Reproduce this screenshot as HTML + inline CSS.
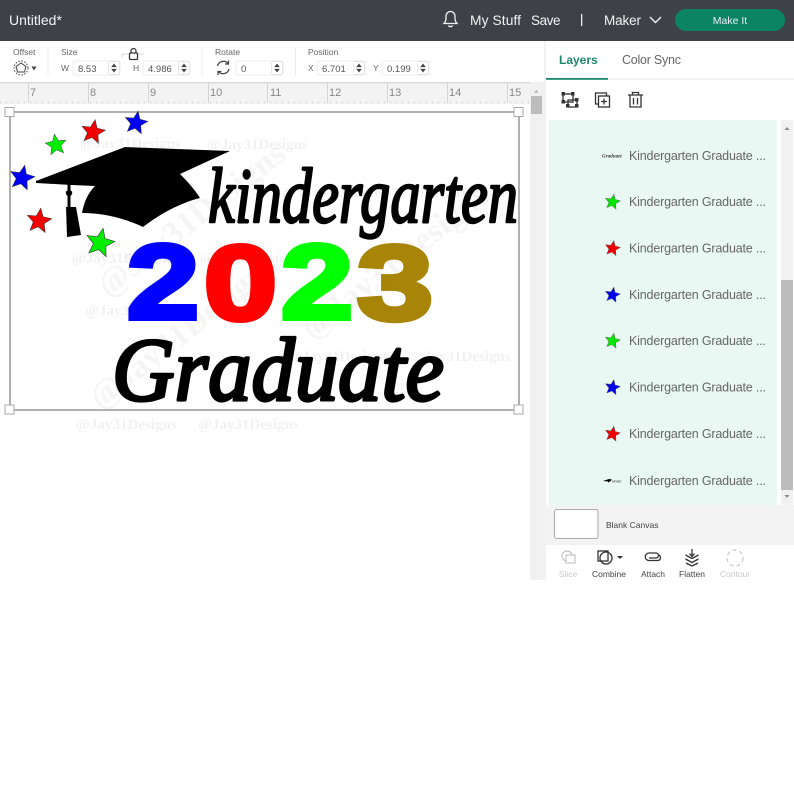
<!DOCTYPE html>
<html><head><meta charset="utf-8"><title>Untitled</title>
<style>
html,body{margin:0;padding:0;background:#fff;width:794px;height:794px;overflow:hidden}
svg{display:block}
text{font-family:"Liberation Sans",sans-serif}
.wm{font-family:"Liberation Serif",serif;font-weight:bold;fill:#000;opacity:.05;font-size:15px}
.wl{font-family:"Liberation Serif",serif;font-weight:bold;fill:#000;opacity:.035;font-size:34px}
.sm{font-size:8.5px;fill:#666}
.val{font-size:9.5px;fill:#555}
.rn{font-size:11px;fill:#888}
.ly{font-size:12.5px;fill:#666}
.tool{font-size:8.5px;fill:#444;text-anchor:middle}
.ic{fill:none;stroke:#333;stroke-width:1.3}
.d{font-weight:bold;font-size:106px;stroke-width:5;stroke-linejoin:miter;paint-order:stroke}
.sc{font-family:"Liberation Serif",serif;font-style:italic;fill:#000;stroke:#000;stroke-linejoin:round}
</style></head><body>
<svg width="794" height="794" viewBox="0 0 794 794" xmlns="http://www.w3.org/2000/svg">
<defs>
<polygon id="s" points="0,-1 .2645,-.364 .951,-.309 .428,.139 .588,.809 0,.45 -.588,.809 -.428,.139 -.951,-.309 -.2645,-.364"/>
<g id="sp"><rect x="0" y="0" width="11" height="13" rx="2" fill="#fff" stroke="#ddd" stroke-width=".7"/><path d="M5.5 2l2.800 3.600h-5.600zM5.500 11l2.800-3.600h-5.600z" fill="#444"/></g>
</defs>

<!-- top bar -->
<rect width="794" height="41" fill="#3e4248"/>
<text x="9" y="25" font-size="14" fill="#f2f2f2">Untitled*</text>
<path d="M444 23.5c2-2 2-4 2-7 0-3 2-5 4.500-5s4.500 2 4.500 5c0 3 0 5 2 7zM448.500 25.500c.5 1.500 3.500 1.500 4 0" fill="none" stroke="#f2f2f2" stroke-width="1.300"/>
<text x="470" y="25" font-size="13.800" fill="#f2f2f2" textLength="51">My Stuff</text>
<text x="531" y="25" font-size="13.500" fill="#f2f2f2" textLength="29.500">Save</text>
<rect x="581" y="14" width="1.300" height="12" fill="#eee"/>
<text x="604" y="25" font-size="13.500" fill="#f2f2f2" textLength="37">Maker</text>
<path d="M650 17l5.500 5.500 5.500-5.500" fill="none" stroke="#f2f2f2" stroke-width="1.400"/>
<rect x="675" y="9" width="110" height="22" rx="11" fill="#0b8463"/>
<text x="730" y="24" font-size="10.500" fill="#eef" text-anchor="middle">Make It</text>

<!-- toolbar -->
<text x="13" y="55" class="sm">Offset</text>
<g fill="none" stroke="#444" stroke-width="1"><polygon points="21,63 26,66.500 24.500,72 17.500,72 16,66.500"/><circle cx="21" cy="68" r="7" stroke-dasharray="1.500 1.500"/></g>
<path d="M31.500 66.500h5l-2.500 4z" fill="#444"/>
<rect x="47.500" y="48" width="1" height="28" fill="#ececec"/>
<text x="61" y="55" class="sm">Size</text>
<text x="61" y="71" class="sm">W</text>
<rect x="73" y="61" width="47" height="14" rx="2" fill="#fff" stroke="#e8e8e8" stroke-width=".8"/>
<text x="78" y="72" class="val">8.53</text>
<use href="#sp" x="108.500" y="61.500"/>
<path d="M122 58v-4h6M138 54h6" fill="none" stroke="#ccc" stroke-width=".7"/>
<rect x="129.500" y="53" width="8" height="6.500" rx="1" fill="none" stroke="#333" stroke-width="1.300"/>
<path d="M131 53v-2a2.500 2.500 0 0 1 5 0v2" fill="none" stroke="#333" stroke-width="1.200"/>
<text x="133" y="71" class="sm">H</text>
<rect x="143" y="61" width="47" height="14" rx="2" fill="#fff" stroke="#e8e8e8" stroke-width=".8"/>
<text x="148" y="72" class="val">4.986</text>
<use href="#sp" x="178.500" y="61.500"/>
<rect x="201.500" y="48" width="1" height="28" fill="#ececec"/>
<text x="215" y="55" class="sm">Rotate</text>
<path d="M217.500 66a6 6 0 0 1 10.500-2.500M229 69a6 6 0 0 1-10.500 2.500M228.500 60.500v3.500h-3.500M218 75v-3.500h3.500" fill="none" stroke="#444" stroke-width="1.300"/>
<rect x="236" y="61" width="47" height="14" rx="2" fill="#fff" stroke="#e8e8e8" stroke-width=".8"/>
<text x="241" y="72" class="val">0</text>
<use href="#sp" x="271.500" y="61.500"/>
<rect x="295" y="48" width="1" height="28" fill="#ececec"/>
<text x="308" y="55" class="sm">Position</text>
<text x="308" y="71" class="sm">X</text>
<rect x="317" y="61" width="48" height="14" rx="2" fill="#fff" stroke="#e8e8e8" stroke-width=".8"/>
<text x="322" y="72" class="val">6.701</text>
<use href="#sp" x="353.500" y="61.500"/>
<text x="373" y="71" class="sm">Y</text>
<rect x="382" y="61" width="47" height="14" rx="2" fill="#fff" stroke="#e8e8e8" stroke-width=".8"/>
<text x="387" y="72" class="val">0.199</text>
<use href="#sp" x="417.500" y="61.500"/>

<!-- ruler -->
<rect x="0" y="82" width="530" height="22" fill="#f3f3f3"/>
<rect x="0" y="82" width="544" height="1.300" fill="#d8d8d8"/>
<path d="M0 102.500H530" stroke="#d4d4d4" stroke-width="2" stroke-dasharray="1 5"/>
<g fill="#d6d6d6">
<rect x="28" y="83" width="1" height="20"/><rect x="88" y="83" width="1" height="20"/><rect x="148" y="83" width="1" height="20"/><rect x="208" y="83" width="1" height="20"/><rect x="267" y="83" width="1" height="20"/><rect x="327" y="83" width="1" height="20"/><rect x="387" y="83" width="1" height="20"/><rect x="447" y="83" width="1" height="20"/><rect x="507" y="83" width="1" height="20"/>
</g>
<text x="30" y="96" class="rn">7</text><text x="90" y="96" class="rn">8</text><text x="150" y="96" class="rn">9</text><text x="210" y="96" class="rn">10</text><text x="270" y="96" class="rn">11</text><text x="329" y="96" class="rn">12</text><text x="389" y="96" class="rn">13</text><text x="449" y="96" class="rn">14</text><text x="509" y="96" class="rn">15</text>
<rect x="530" y="82" width="14" height="498" fill="#f1f1f1"/>
<path d="M534 92.500h4.500l-2.250-2.500z" fill="#aaa"/>
<rect x="531" y="96" width="11" height="18" fill="#bdbdbd"/>

<!-- watermarks -->
<text x="80" y="148" class="wm">@Jay31Designs</text>
<text x="207" y="149" class="wm">@Jay31Designs</text>
<text x="283" y="197" class="wm">@Jay31Designs</text>
<text x="410" y="197" class="wm">@Jay31Designs</text>
<text x="72" y="263" class="wm">@Jay31Designs</text>
<text x="200" y="263" class="wm">@Jay31Designs</text>
<text x="85" y="315" class="wm">@Jay31Designs</text>
<text x="288" y="361" class="wm">@Jay31Designs</text>
<text x="410" y="361" class="wm">@Jay31Designs</text>
<text x="76" y="429" class="wm">@Jay31Designs</text>
<text x="198" y="429" class="wm">@Jay31Designs</text>
<text class="wl" transform="translate(108 298) rotate(-38)">@Jay31Designs</text>
<text class="wl" transform="translate(100 410) rotate(-38)">@Jay31Designs</text>
<text class="wl" transform="translate(312 340) rotate(-38)">@Jay31Designs</text>

<!-- selection box -->
<rect x="10" y="112" width="509" height="298" fill="none" stroke="#a8a8a8" stroke-width="1.800"/>

<!-- cap -->
<path d="M36 181 125 147 230 151 180 174C188 182 195 190 200 198 180 203 160 214 143 227 124 218 103 213 82 213 84 202 88 193 95 186L72 185 36 183Z" fill="#000"/>
<path d="M69 184v24" stroke="#000" stroke-width="3"/>
<circle cx="69" cy="193" r="3.200" fill="#000"/>
<path d="M66 207H76L81 235 67 237Z" fill="#000"/>

<!-- stars -->
<use href="#s" transform="translate(136 123) rotate(10) scale(12)" fill="#0000f0" stroke="#333" stroke-width=".04"/>
<use href="#s" transform="translate(93 132) rotate(10) scale(12.500)" fill="#f00000" stroke="#333" stroke-width=".04"/>
<use href="#s" transform="translate(56 145) rotate(-8) scale(11)" fill="#00ee00" stroke="#333" stroke-width=".04"/>
<use href="#s" transform="translate(22 178) rotate(12) scale(13)" fill="#0000f0" stroke="#333" stroke-width=".04"/>
<use href="#s" transform="translate(39 221) rotate(8) scale(13)" fill="#f00000" stroke="#333" stroke-width=".04"/>
<use href="#s" transform="translate(100 243) rotate(12) scale(15)" fill="#00ee00" stroke="#333" stroke-width=".04"/>

<!-- digits -->
<text class="d" x="127" y="318.500" fill="#0000ff" stroke="#0000ff" textLength="72" lengthAdjust="spacingAndGlyphs">2</text>
<text class="d" x="204" y="319.500" fill="#ff0000" stroke="#ff0000" textLength="73" lengthAdjust="spacingAndGlyphs">0</text>
<text class="d" x="281" y="318.500" fill="#00ff00" stroke="#00ff00" textLength="72" lengthAdjust="spacingAndGlyphs">2</text>
<text class="d" x="357" y="319.500" fill="#a88407" stroke="#a88407" textLength="76" lengthAdjust="spacingAndGlyphs">3</text>

<!-- script -->
<text class="sc" x="208" y="222" font-size="78" stroke-width="2.400" textLength="310" lengthAdjust="spacingAndGlyphs">kindergarten</text>
<text class="sc" x="112" y="400" font-size="90" stroke-width="3.200" textLength="332" lengthAdjust="spacingAndGlyphs">Graduate</text>

<!-- handles -->
<g fill="#fff" stroke="#a8a8a8" stroke-width="1">
<rect x="5" y="107.500" width="9" height="9"/><rect x="514" y="107.500" width="9" height="9"/><rect x="5" y="405" width="9" height="9"/><rect x="514" y="405" width="9" height="9"/>
</g>

<!-- side panel -->
<rect x="544.500" y="41" width="1" height="540" fill="#e4e4e4"/>
<text x="559" y="64" font-size="12" font-weight="bold" fill="#1a8a6c">Layers</text>
<rect x="546" y="78" width="62" height="1.800" fill="#1a8a6c"/>
<rect x="608" y="78.500" width="186" height="1" fill="#eaeaea"/>
<text x="622" y="64" font-size="12.500" fill="#666" textLength="59">Color Sync</text>
<!-- group/duplicate/delete icons -->
<g class="ic">
<rect x="563" y="94" width="10" height="8"/><rect x="568" y="100" width="9" height="7"/>
</g>
<g fill="#333"><rect x="561.500" y="92" width="3.500" height="3.500"/><rect x="571" y="92" width="3.500" height="3.500"/><rect x="561.500" y="100" width="3.500" height="3.500"/><rect x="566" y="104" width="3.500" height="3.500"/><rect x="575" y="104" width="3.500" height="3.500"/><rect x="575" y="98" width="3.500" height="3.500"/></g>
<g class="ic">
<path d="M598 104h-2.500V93h11v2.500"/><rect x="598.500" y="96" width="11" height="11"/><path d="M604 98.500v6M601 101.500h6"/>
<path d="M628 95h15M632.500 95v-2.500h6V95M630 95v12h11V95M633.500 98v6.500M637.500 98v6.500"/>
</g>

<!-- layer list -->
<rect x="549" y="120" width="228" height="385" fill="#eaf8f4"/>
<rect x="781" y="120" width="12" height="385" fill="#f1f1f1"/>
<rect x="781" y="280" width="12" height="210" fill="#bcbcbc"/>
<path d="M784.500 130h5l-2.500-3zM784.500 495h5l-2.500 3z" fill="#888"/>

<text x="602" y="157.500" font-size="5" font-style="italic" font-weight="bold" fill="#333" textLength="20" style="font-family:'Liberation Serif',serif">Graduate</text>
<text x="629" y="160" class="ly" textLength="137">Kindergarten Graduate ...</text>
<use href="#s" transform="translate(612.500 202) rotate(10) scale(8)" fill="#00e600" stroke="#555" stroke-width=".05"/>
<text x="629" y="206" class="ly" textLength="137">Kindergarten Graduate ...</text>
<use href="#s" transform="translate(612.500 248.500) rotate(10) scale(8)" fill="#ee0000" stroke="#555" stroke-width=".05"/>
<text x="629" y="252.500" class="ly" textLength="137">Kindergarten Graduate ...</text>
<use href="#s" transform="translate(612.500 295) rotate(10) scale(8)" fill="#0000e6" stroke="#555" stroke-width=".05"/>
<text x="629" y="299" class="ly" textLength="137">Kindergarten Graduate ...</text>
<use href="#s" transform="translate(612.500 341) rotate(10) scale(8)" fill="#00e600" stroke="#555" stroke-width=".05"/>
<text x="629" y="345" class="ly" textLength="137">Kindergarten Graduate ...</text>
<use href="#s" transform="translate(612.500 387.500) rotate(10) scale(8)" fill="#0000e6" stroke="#555" stroke-width=".05"/>
<text x="629" y="391.500" class="ly" textLength="137">Kindergarten Graduate ...</text>
<use href="#s" transform="translate(612.500 434) rotate(10) scale(8)" fill="#ee0000" stroke="#555" stroke-width=".05"/>
<text x="629" y="438" class="ly" textLength="137">Kindergarten Graduate ...</text>
<path d="M603 481l6-2 3 .5-2 2-2 1v-1z" fill="#000"/>
<text x="612" y="482.500" font-size="3.500" fill="#333">kinder</text>
<text x="629" y="485" class="ly" textLength="137">Kindergarten Graduate ...</text>

<!-- blank canvas -->
<rect x="546" y="505" width="248" height="40" fill="#f3f3f3"/>
<rect x="554.500" y="509.500" width="43.500" height="29" rx="2" fill="#fff" stroke="#aaa"/>
<text x="606" y="528" font-size="8.500" fill="#444">Blank Canvas</text>

<!-- bottom tools -->
<g fill="none" stroke="#c4c4c4" stroke-width="1.200"><circle cx="567" cy="556" r="5"/><rect x="566" y="555" width="9" height="8" fill="#fff"/></g>
<text x="568" y="577" class="tool" style="fill:#c8c8c8">Slice</text>
<g class="ic"><rect x="598" y="551" width="10" height="10"/><circle cx="606" cy="558" r="6"/></g>
<path d="M617 556h6l-3 3z" fill="#333"/>
<text x="609" y="577" class="tool">Combine</text>
<path d="M649 558h7a2.500 2.500 0 0 0 0-5h-7a3 3 0 0 0 0 7.500h9a3 3 0 0 0 1-5.500" class="ic"/>
<text x="653" y="577" class="tool">Attach</text>
<path d="M692 549v7M689.500 553.500l2.500 3 2.500-3M685.500 555l6.500 3.500 6.500-3.500M685.500 559l6.500 3.500 6.500-3.500M686 563l6 3 6-3" class="ic"/>
<text x="692" y="577" class="tool">Flatten</text>
<circle cx="735" cy="558" r="8" fill="none" stroke="#c8c8c8" stroke-width="1.200" stroke-dasharray="4 3"/>
<text x="735" y="577" class="tool" style="fill:#c8c8c8">Contour</text>
</svg>
</body></html>
